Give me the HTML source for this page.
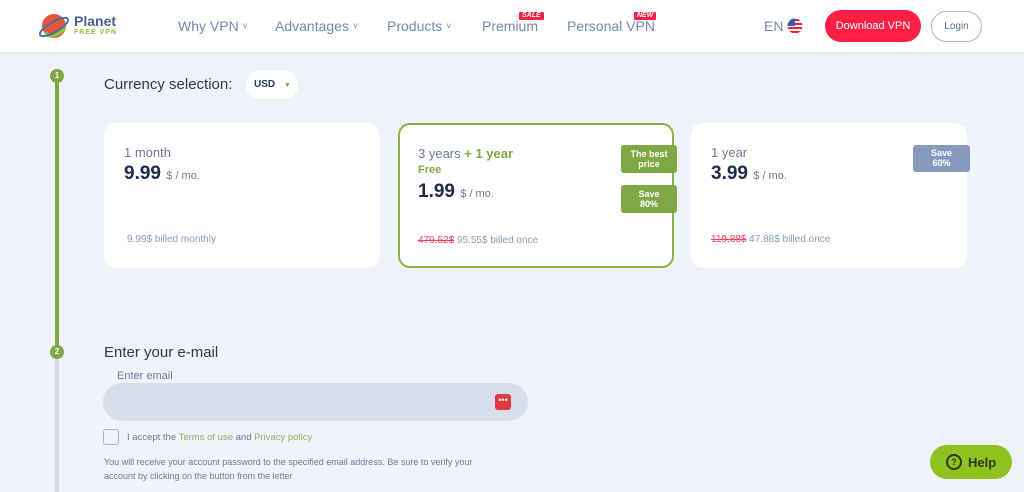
<!DOCTYPE html>
<html><head><meta charset="utf-8"><style>
*{margin:0;padding:0;box-sizing:border-box}
body{width:1024px;height:489px;overflow:hidden;background:#eff2f9;font-family:"Liberation Sans",sans-serif;position:relative;color:#2b3a55}
.hdr{position:absolute;left:0;top:0;width:1024px;height:52px;background:#fff;box-shadow:0 1px 4px rgba(0,0,0,.08)}
.a{position:absolute;white-space:nowrap}
.nav{font-size:14px;color:#7289ad;top:18px}
.nav i{font-style:normal;font-size:9px;vertical-align:2px}
.tag{position:absolute;background:#ff1f45;color:#fff;font-size:7px;font-style:italic;font-weight:bold;padding:0 3px;line-height:8px;border-radius:1px}
.card{position:absolute;top:123px;width:276px;height:145px;background:#fff;border-radius:12px}
.t{font-size:13px;color:#6c7a96}
.pr{font-size:19px;font-weight:900;color:#1d2a48}
.pr span{font-size:11px;font-weight:normal;color:#6c7a96}
.bl{font-size:10px;color:#8a9ab8}
.bl s{color:#f2415a}
.badge{position:absolute;background:#7fa844;color:#fff;font-size:9px;font-weight:bold;text-align:center;line-height:10px;border-radius:3px}
</style></head><body>
<div class="hdr">
<svg class="a" style="left:37px;top:11px" width="34" height="30" viewBox="0 0 34 30"><circle cx="17" cy="15" r="12" fill="#e8533a"/><path d="M6 19 Q17 28 29 14 L29 18 Q22 28 10 26Z" fill="#8cc43c"/><ellipse cx="17" cy="16" rx="16" ry="5" transform="rotate(-30 17 16)" fill="none" stroke="#4a6fa5" stroke-width="2"/></svg>
<div class="a" style="left:74px;top:13px;font-size:14px;font-weight:bold;color:#4a6190">Planet</div>
<div class="a" style="left:74px;top:29px;font-size:7px;font-weight:bold;color:#8cc43c;letter-spacing:1px">FREE VPN</div>
<div class="a nav" style="left:178px">Why VPN <i>˅</i></div>
<div class="a nav" style="left:275px">Advantages <i>˅</i></div>
<div class="a nav" style="left:387px">Products <i>˅</i></div>
<div class="a nav" style="left:482px">Premium</div>
<div class="tag" style="left:519px;top:12px">SALE</div>
<div class="a nav" style="left:567px">Personal VPN</div>
<div class="tag" style="left:634px;top:12px">NEW</div>
<div class="a nav" style="left:764px">EN</div>
<svg class="a" style="left:787px;top:18px" width="16" height="16" viewBox="0 0 16 16"><clipPath id="c"><circle cx="8" cy="8" r="7.5"/></clipPath><g clip-path="url(#c)"><rect width="16" height="16" fill="#fff"/><rect y="1" width="16" height="2" fill="#e23"/><rect y="5" width="16" height="2" fill="#e23"/><rect y="9" width="16" height="2" fill="#e23"/><rect y="13" width="16" height="2" fill="#e23"/><rect width="8" height="8" fill="#3a5ba8"/></g></svg>
<div class="a" style="left:825px;top:10px;width:96px;height:32px;background:#ff1f45;border-radius:16px;color:#fff;font-size:11px;text-align:center;line-height:32px">Download VPN</div>
<div class="a" style="left:931px;top:11px;width:51px;height:31px;border:1px solid #a9b9d3;border-radius:16px;color:#5a6f96;font-size:10px;text-align:center;line-height:29px">Login</div>
</div>
<div class="a" style="left:55px;top:76px;width:4px;height:276px;background:#7fa844"></div>
<div class="a" style="left:55px;top:352px;width:4px;height:140px;background:#d3dae9"></div>
<div class="a" style="left:50px;top:69px;width:14px;height:14px;border-radius:50%;background:#7fa844;color:#fff;font-size:8px;font-weight:bold;text-align:center;line-height:14px">1</div>
<div class="a" style="left:50px;top:345px;width:14px;height:14px;border-radius:50%;background:#7fa844;color:#fff;font-size:8px;font-weight:bold;text-align:center;line-height:14px">2</div>
<div class="a" style="left:104px;top:76px;font-size:15px;color:#2b3a55">Currency selection:</div>
<div class="a" style="left:246px;top:70px;width:52px;height:29px;background:#fff;border-radius:14px;font-size:10px;font-weight:bold;line-height:29px;padding-left:8px">USD <span style="color:#7fa844;font-size:7px;margin-left:6px">▼</span></div>

<div class="card" style="left:104px">
<div class="a t" style="left:20px;top:22px">1 month</div>
<div class="a pr" style="left:20px;top:40px">9.99 <span>$ / mo.</span></div>
<div class="a bl" style="left:23px;top:111px">9.99$ billed monthly</div>
</div>
<div class="card" style="left:398px;border:2px solid #8ab04a">
<div class="a t" style="left:18px;top:21px">3 years <b style="color:#7fa844">+ 1 year</b></div>
<div class="a" style="left:18px;top:39px;font-size:11px;font-weight:bold;color:#7fa844">Free</div>
<div class="a pr" style="left:18px;top:56px">1.99 <span>$ / mo.</span></div>
<div class="a bl" style="left:18px;top:110px"><s>479.52$</s> 95.55$ billed once</div>
</div>
<div class="badge" style="left:621px;top:145px;width:56px;height:28px;padding-top:4px">The best<br>price</div>
<div class="badge" style="left:621px;top:185px;width:56px;height:28px;padding-top:4px">Save<br>80%</div>
<div class="card" style="left:691px">
<div class="a t" style="left:20px;top:22px">1 year</div>
<div class="a pr" style="left:20px;top:40px">3.99 <span>$ / mo.</span></div>
<div class="a bl" style="left:20px;top:111px"><s>119.88$</s> 47.88$ billed once</div>
</div>
<div class="badge" style="left:913px;top:145px;width:57px;height:27px;padding-top:3px;background:#8799bd">Save<br>60%</div>

<div class="a" style="left:104px;top:344px;font-size:15px;color:#2b3a55">Enter your e-mail</div>
<div class="a" style="left:117px;top:370px;font-size:11px;color:#6c7a96">Enter email</div>
<div class="a" style="left:103px;top:383px;width:425px;height:38px;background:#d8deec;border-radius:19px"></div>
<div class="a" style="left:495px;top:394px;width:16px;height:16px;background:#e0393e;border-radius:3px;color:#fff;font-size:9px;text-align:center;line-height:13px">•••</div>
<div class="a" style="left:103px;top:429px;width:16px;height:16px;border:1px solid #aab6cf;border-radius:3px"></div>
<div class="a" style="left:127px;top:432px;font-size:9.5px;color:#6c7a96">I accept the <span style="color:#8fb060">Terms of use</span> and <span style="color:#8fb060">Privacy policy</span></div>
<div class="a" style="left:104px;top:455px;font-size:9px;color:#6c7a96;line-height:14px">You will receive your account password to the specified email address. Be sure to verify your<br>account by clicking on the button from the letter</div>
<div class="a" style="left:930px;top:445px;width:82px;height:34px;background:#8dc21f;border-radius:17px"></div>
<div class="a" style="left:946px;top:454px;width:16px;height:16px;border:2px solid #2d3a1a;border-radius:50%;font-size:9px;font-weight:bold;color:#2d3a1a;text-align:center;line-height:12px">?</div>
<div class="a" style="left:968px;top:455px;font-size:13px;font-weight:bold;color:#2d3a1a">Help</div>
</body></html>
